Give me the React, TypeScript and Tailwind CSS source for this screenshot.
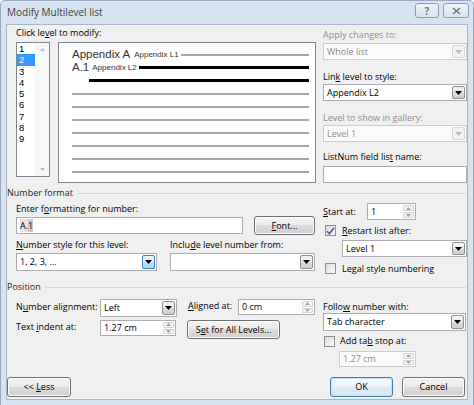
import type { ReactElement, ReactNode } from 'react'

function Arrow({ disabled = false, hot = false }: { disabled?: boolean; hot?: boolean }): ReactElement {
  const tone = hot
    ? 'border-[#3c7fb1] bg-[linear-gradient(#eaf6fd,#d9f0fc_50%,#bee6fd_50%,#a7d9f5)]'
    : disabled
      ? 'border-[#d9d9d9] bg-[#f4f4f4]'
      : 'border-[#8e8f8f] bg-[linear-gradient(#f2f2f2,#ebebeb_50%,#dddddd_50%,#cfcfcf)]'
  return (
    <div className={`m-px flex w-[13px] shrink-0 items-center justify-center rounded-[2px] border ${tone}`}>
      <svg width="7" height="4" viewBox="0 0 7 4">
        <path d="M0 0h7L3.5 4z" fill={disabled ? '#b9b9b9' : '#000'} />
      </svg>
    </div>
  )
}

interface FieldProps {
  value?: ReactNode
  className?: string
  disabled?: boolean
  hot?: boolean
}

function Combo({ value, className = '', disabled = false, hot = false }: FieldProps): ReactElement {
  return (
    <div
      className={`flex border ${disabled ? 'border-[#cdcdcd] bg-[#fbfbfb] text-[#8d8d8d]' : 'border-[#abadb3] bg-white text-black'} ${className}`}
    >
      <div className="flex flex-1 items-center pl-[3px]">{value}</div>
      <Arrow disabled={disabled} hot={hot} />
    </div>
  )
}

function TextBox({ value, className = '' }: FieldProps): ReactElement {
  return (
    <div className={`flex items-center border border-[#abadb3] bg-white pl-[3px] ${className}`}>{value}</div>
  )
}

function Spin({ value, className = '', disabled = false }: FieldProps): ReactElement {
  return (
    <div
      className={`flex border ${disabled ? 'border-[#cdcdcd] bg-[#fbfbfb] text-[#8d8d8d]' : 'border-[#abadb3] bg-white text-black'} ${className}`}
    >
      <div className="flex flex-1 items-center pl-[3px]">{value}</div>
      <div className="m-px flex w-[11px] flex-col gap-px">
        <div className="flex flex-1 items-center justify-center rounded-[1px] border border-[#d6d6d6] bg-[#f3f3f3]">
          <svg width="5" height="3" viewBox="0 0 5 3">
            <path d="M0 3h5L2.5 0z" fill="#a5a5a5" />
          </svg>
        </div>
        <div className="flex flex-1 items-center justify-center rounded-[1px] border border-[#d6d6d6] bg-[#f3f3f3]">
          <svg width="5" height="3" viewBox="0 0 5 3">
            <path d="M0 0h5L2.5 3z" fill="#a5a5a5" />
          </svg>
        </div>
      </div>
    </div>
  )
}

function Btn({ children, className = '', primary = false }: { children: ReactNode; className?: string; primary?: boolean }): ReactElement {
  return (
    <div
      className={`flex items-center justify-center rounded-[3px] border ${primary ? 'border-[#3c7fb1] bg-[linear-gradient(#f4f9fc,#ecf4f9_50%,#dfecf4_50%,#d3e5f0)] shadow-[inset_0_0_0_1px_#bfe3f7]' : 'border-[#707070] bg-[linear-gradient(#f2f2f2,#ebebeb_50%,#dddddd_50%,#cfcfcf)] shadow-[inset_0_0_0_1px_#fcfcfc]'} ${className}`}
    >
      {children}
    </div>
  )
}

function Check({ checked = false }: { checked?: boolean }): ReactElement {
  return (
    <div className="flex h-[11px] w-[11px] shrink-0 items-center justify-center border border-[#8e8f8f] bg-[linear-gradient(135deg,#dcdcdc,#fbfbfb)]">
      {checked && (
        <svg width="9" height="8" viewBox="0 0 9 8">
          <path d="M1 4.2l2.4 2.6L8 1" stroke="#4a5f97" strokeWidth="1.6" fill="none" />
        </svg>
      )}
    </div>
  )
}

function Section({ title }: { title: string }): ReactElement {
  return (
    <div className="-ml-[9px] flex h-[14px] items-center gap-[4px] pr-[1px] leading-[14px] text-[#1e1e1e]">
      <span>{title}</span>
      <div className="h-px flex-1 bg-[#d8d8d8]" />
    </div>
  )
}

const levels = ['1', '2', '3', '4', '5', '6', '7', '8', '9']
const grayRows = [0, 1, 2, 3, 4, 5, 6]

export default function App(): ReactElement {
  return (
    <div className="h-[405px] w-[474px] overflow-hidden rounded-t-[5px] border-x border-t border-[#97a8bf] bg-[#d8e3f1] font-['Open_Sans',sans-serif] text-[9px] text-black">
      {/* title bar */}
      <div className="flex h-[23px] items-start pr-[4px] pt-[2px]">
        <div className="flex-1 pl-[6px] text-[10px] leading-[18px] text-[#3f3f3f]">Modify Multilevel list</div>
        <div className="flex h-[15px] w-[24px] items-center justify-center rounded-[3px] border border-[#8d9db3] bg-[linear-gradient(#eef2f7,#dbe3ed)] text-[10px] font-bold leading-none text-[#6f7885]">
          ?
        </div>
        <div className="ml-[4px] flex h-[15px] w-[26px] items-center justify-center rounded-[3px] border border-[#8d9db3] bg-[linear-gradient(#eef2f7,#dbe3ed)]">
          <svg width="9" height="8" viewBox="0 0 9 8">
            <path d="M1 1l7 6M8 1L1 7" stroke="#6f7885" strokeWidth="1.6" />
          </svg>
        </div>
      </div>

      {/* client area */}
      <div className="ml-[5px] flex h-[376px] w-[462px] flex-col border border-[#a9b7ca] bg-[#f0f0f0] pl-[9px]">
        {/* top section */}
        <div className="flex h-[161px]">
          <div className="flex w-[300px] flex-col">
            <div className="mt-[1px] h-[14px] leading-[14px]">
              Click le<u>v</u>el to modify:
            </div>
            <div className="mt-[2px] flex gap-[8px]">
              <div className="flex h-[135px] w-[34px] border border-[#828790] bg-white">
                <div className="flex w-[18px] flex-col font-['Liberation_Sans',Arial,sans-serif] text-[9.5px]">
                  {levels.map((l) => (
                    <div
                      key={l}
                      className={`h-[11.25px] overflow-hidden pl-[2px] leading-[11.25px] ${l === '2' ? 'bg-[#3399ff] text-white' : 'text-black'}`}
                    >
                      {l}
                    </div>
                  ))}
                </div>
                <div className="flex flex-1 flex-col items-center justify-between bg-[#f7f7f7] py-[5px]">
                  <svg width="5" height="3" viewBox="0 0 5 3">
                    <path d="M0 3h5L2.5 0z" fill="#bdbdbd" />
                  </svg>
                  <svg width="5" height="3" viewBox="0 0 5 3">
                    <path d="M0 0h5L2.5 3z" fill="#bdbdbd" />
                  </svg>
                </div>
              </div>
              <div className="flex h-[141px] flex-1 flex-col border border-[#828790] bg-white pl-[13px] pr-[6px] pt-[5px] font-['Liberation_Sans',Arial,sans-serif] text-[#333]">
                <div className="flex h-[13px] items-center">
                  <span className="text-[11.5px] leading-none">Appendix A</span>
                  <span className="ml-[4px] text-[8px] leading-none">Appendix L1</span>
                  <div className="ml-[2px] h-[2px] flex-1 bg-[#a6a6a6]" />
                </div>
                <div className="flex h-[13px] items-center">
                  <span className="text-[11.5px] leading-none">A.1</span>
                  <span className="ml-[3px] text-[8px] leading-none">Appendix L2</span>
                  <div className="ml-[2px] h-[3px] flex-1 bg-black" />
                </div>
                <div className="flex h-[13px] items-center pl-[17px]">
                  <div className="h-[3px] flex-1 bg-black" />
                </div>
                {grayRows.map((r) => (
                  <div key={r} className="flex h-[13px] items-center">
                    <div className="h-[2px] flex-1 bg-[#a6a6a6]" />
                  </div>
                ))}
              </div>
            </div>
          </div>

          <div className="ml-[7px] flex w-[144px] flex-col">
            <div className="mt-[3px] h-[13px] leading-[13px] text-[#8d8d8d]">Apply changes to:</div>
            <Combo className="mt-[2px] h-[17px]" value="Whole list" disabled />
            <div className="mt-[10px] h-[13px] leading-[13px]">
              Lin<u>k</u> level to style:
            </div>
            <Combo className="mt-[1px] h-[17px]" value="Appendix L2" />
            <div className="mt-[10px] h-[13px] leading-[13px] text-[#8d8d8d]">Level to show in gallery:</div>
            <Combo className="mt-[1px] h-[17px]" value="Level 1" disabled />
            <div className="mt-[8px] h-[13px] leading-[13px]">
              ListNum field lis<u>t</u> name:
            </div>
            <TextBox className="mt-[3px] h-[17px]" />
          </div>
        </div>

        <Section title="Number format" />

        {/* number format body */}
        <div className="flex h-[80px]">
          <div className="flex w-[300px] flex-col">
            <div className="mt-[2px] h-[14px] leading-[14px]">
              Enter f<u>o</u>rmatting for number:
            </div>
            <div className="flex h-[19px] items-center">
              <TextBox
                className="h-[17px] w-[227px]"
                value={
                  <span>
                    <span className="bg-[#e4e4e4]">A.</span>
                    <span className="bg-[#c9c9c9]">1</span>
                  </span>
                }
              />
              <Btn className="ml-[11px] h-[19px] w-[61px]">
                <span>
                  <u>F</u>ont...
                </span>
              </Btn>
            </div>
            <div className="mt-[3px] flex h-[14px] leading-[14px]">
              <div className="w-[154px]">
                <u>N</u>umber style for this level:
              </div>
              <div>
                Inclu<u>d</u>e level number from:
              </div>
            </div>
            <div className="mt-[1px] flex">
              <Combo className="h-[18px] w-[141px]" value="1, 2, 3, ..." hot />
              <Combo className="ml-[13px] h-[18px] w-[145px]" value="" />
            </div>
          </div>

          <div className="ml-[7px] flex w-[144px] flex-col">
            <div className="mt-[3px] flex h-[17px] items-center">
              <div className="w-[44px]">
                <u>S</u>tart at:
              </div>
              <Spin className="h-[17px] w-[49px]" value="1" />
            </div>
            <div className="mt-[3px] flex h-[15px] items-center pl-[2px]">
              <Check checked />
              <span className="ml-[6px]">
                <u>R</u>estart list after:
              </span>
            </div>
            <Combo className="ml-[19px] mt-[2px] h-[17px] w-[125px]" value="Level 1" />
            <div className="mt-[4px] flex h-[15px] items-center pl-[2px]">
              <Check />
              <span className="ml-[6px]">
                Le<u>g</u>al style numbering
              </span>
            </div>
          </div>
        </div>

        <Section title="Position" />

        {/* position body */}
        <div className="flex">
          <div className="flex w-[300px] flex-col">
            <div className="mt-[5px] flex h-[18px] items-start">
              <div className="mt-px w-[84px] leading-[14px]">
                N<u>u</u>mber alignment:
              </div>
              <Combo className="h-[18px] w-[77px]" value="Left" />
              <div className="ml-[11px] w-[50px] leading-[14px]">
                <u>A</u>ligned at:
              </div>
              <Spin className="h-[16px] w-[77px]" value="0 cm" />
            </div>
            <div className="mt-[3px] flex h-[19px] items-start">
              <div className="w-[84px] leading-[14px]">
                Text <u>i</u>ndent at:
              </div>
              <Spin className="h-[16px] w-[76px]" value="1.27 cm" />
              <Btn className="ml-[11px] h-[19px] w-[93px]">
                <span>
                  S<u>e</u>t for All Levels...
                </span>
              </Btn>
            </div>
          </div>

          <div className="ml-[7px] flex w-[144px] flex-col">
            <div className="mt-[6px] h-[13px] leading-[13px]">
              Follo<u>w</u> number with:
            </div>
            <Combo className="h-[18px] w-[143px]" value="Tab character" />
            <div className="mt-[3px] flex h-[14px] items-center pl-[1px]">
              <Check />
              <span className="ml-[5px]">
                Add ta<u>b</u> stop at:
              </span>
            </div>
            <Spin className="ml-[16px] mt-[3px] h-[16px] w-[77px]" value="1.27 cm" disabled />
          </div>
        </div>

        {/* buttons */}
        <div className="mt-[10px] flex h-[20px] pr-[2px]">
          <Btn className="-ml-[9px] w-[64px]">
            <span>
              &lt;&lt; <u>L</u>ess
            </span>
          </Btn>
          <div className="ml-auto flex gap-[9px]">
            <Btn className="w-[63px]" primary>
              OK
            </Btn>
            <Btn className="w-[63px]">Cancel</Btn>
          </div>
        </div>
      </div>
    </div>
  )
}
